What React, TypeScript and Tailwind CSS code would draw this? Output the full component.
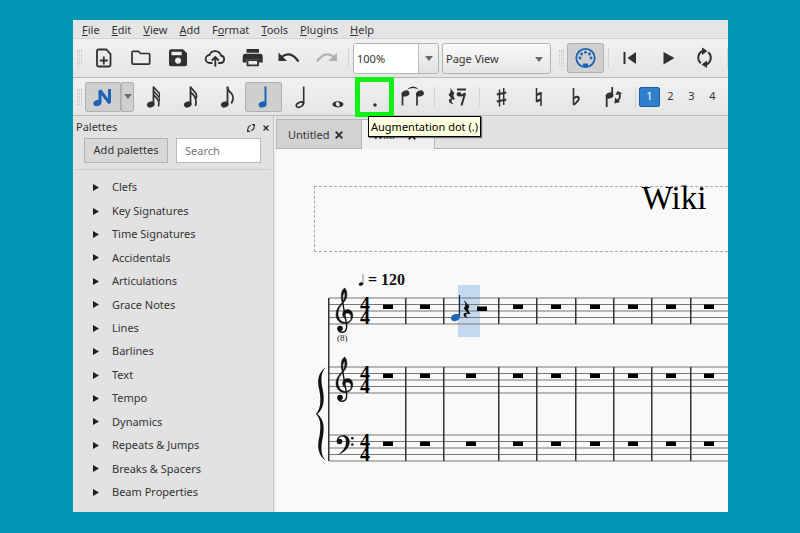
import { useState, type ReactNode } from "react";

const MENUS = [
  ["", "F", "ile"],
  ["", "E", "dit"],
  ["", "V", "iew"],
  ["", "A", "dd"],
  ["F", "o", "rmat"],
  ["", "T", "ools"],
  ["", "P", "lugins"],
  ["", "H", "elp"],
];

const PALETTES = [
  "Clefs",
  "Key Signatures",
  "Time Signatures",
  "Accidentals",
  "Articulations",
  "Grace Notes",
  "Lines",
  "Barlines",
  "Text",
  "Tempo",
  "Dynamics",
  "Repeats & Jumps",
  "Breaks & Spacers",
  "Beam Properties",
];

// x positions measured from the start of the system
const BARLINES = [77, 115, 170, 208, 247, 285, 323, 362];
const RESTS = [59, 96, 142, 189, 227, 266, 304, 342, 380];
const STAVES = [0, 69, 137];

function Tool({ label, active, children }: { label: string; active?: boolean; children: ReactNode }) {
  return (
    <button
      type="button"
      aria-label={label}
      className={`h-[30px] w-[37px] shrink-0 rounded-[3px] ${
        active ? "bg-[#cfcfcf] text-[#1c62b5] ring-1 ring-inset ring-[#b0b0b0]" : "text-[#2f3032]"
      }`}
    >
      <svg width="37" height="30" viewBox="0 0 37 30" fill="none" stroke="currentColor" strokeWidth="2">
        {children}
      </svg>
    </button>
  );
}

function Handle() {
  return (
    <div className="flex w-3 shrink-0 justify-center gap-px">
      <span className="h-4 border-l border-dotted border-[#c2c2c2]" />
      <span className="h-4 border-l border-dotted border-[#c2c2c2]" />
      <span className="h-4 border-l border-dotted border-[#c2c2c2]" />
    </div>
  );
}

function Separator() {
  return (
    <div className="flex w-2 shrink-0 justify-center">
      <span className="h-5 w-px bg-[#d3d3d3]" />
    </div>
  );
}

function Caret() {
  return (
    <svg width="8" height="5" viewBox="0 0 8 5" fill="#6a6a6a">
      <path d="M0 0h8L4 5z" />
    </svg>
  );
}

function FileToolbar() {
  const [zoom, setZoom] = useState("100%");

  return (
    <div className="flex h-[39px] items-center border-b border-[#b9b9b9] bg-linear-to-b from-[#f1f1f1] to-[#e5e5e5]">
      <Handle />
      <Tool label="New">
        <path d="M13.5 6.5h7.8l4.2 4.6v10.9a1.5 1.5 0 0 1-1.5 1.5H13.5A1.5 1.5 0 0 1 12 22V8a1.5 1.5 0 0 1 1.5-1.5z" strokeWidth="1.8" />
        <path d="M18.8 13.5v8M14.8 17.5h8" strokeWidth="1.8" />
      </Tool>
      <Tool label="Open">
        <path d="M10 20V9.5q0-1.2 1.2-1.2h5.3l2 2.2h8q1.2 0 1.2 1.2V20q0 1.2-1.2 1.2H11.2Q10 21.2 10 20z" strokeWidth="1.7" />
      </Tool>
      <Tool label="Save">
        <path
          d="M12 6.3h12l4 4v11.2q0 1.8-1.8 1.8H12q-2 0-2-1.8V8.2q0-1.9 2-1.9zM12.5 8.8v3.4h10.2V8.8zM19 14.5a3.1 3.1 0 1 0 .1 0z"
          fill="currentColor"
          fillRule="evenodd"
          stroke="none"
        />
      </Tool>
      <Tool label="Save to cloud">
        <path d="M16.5 20h-2.7a4 4 0 0 1-.3-8 6 6 0 0 1 11.4.5 3.8 3.8 0 0 1 .1 7.5h-2.8" strokeWidth="1.8" />
        <path d="M19.3 23.5v-9M15.8 17.5l3.5-3.5 3.5 3.5" strokeWidth="1.9" />
      </Tool>
      <Tool label="Print">
        <path
          d="M13.5 6h12.5v3.7H13.5zM12.5 10.8h14.5q2.7 0 2.7 2.7v6h-3.7v-3.2H13.5v3.2H9.7v-6q0-2.7 2.8-2.7z"
          fill="currentColor"
          stroke="none"
        />
        <path d="M14.500 17.200h10.500v5.200H14.500z" strokeWidth="1.8" />
      </Tool>
      <Tool label="Undo">
        <path d="M11.500 14q9-7 17 4.500" strokeWidth="2.200" />
        <path d="M8.500 9.500v8.500h8.500z" fill="currentColor" stroke="none" />
      </Tool>
      <Tool label="Redo">
        <g className="text-[#b0b0b0]" stroke="currentColor">
          <path d="M27 14q-9-7-17 4.500" strokeWidth="2.200" />
          <path d="M30 9.500v8.500h-8.500z" fill="currentColor" stroke="none" />
        </g>
      </Tool>
      <Separator />
      <div className="ml-px flex h-[31px] w-[86px] shrink-0 rounded-[3px] border border-[#b4b4b4] bg-white">
        <input
          type="text"
          aria-label="Zoom"
          value={zoom}
          onChange={(e) => setZoom(e.target.value)}
          className="w-0 flex-1 rounded-l-[3px] bg-white px-[3px] pt-0.5 outline-none"
        />
        <button
          type="button"
          aria-label="Zoom presets"
          className="flex w-5 items-center justify-center rounded-r-[3px] border-l border-[#bdbdbd] bg-linear-to-b from-[#f5f5f5] to-[#e2e2e2]"
        >
          <Caret />
        </button>
      </div>
      <div className="relative ml-[3px] shrink-0">
        <select
          aria-label="View mode"
          className="h-[31px] w-[109px] appearance-none rounded-[3px] border border-[#b4b4b4] bg-linear-to-b from-[#fafafa] to-[#e6e6e6] px-[3px] pt-0.5 outline-none"
        >
          <option>Page View</option>
          <option>Continuous View</option>
          <option>Single Page</option>
        </select>
        <span className="pointer-events-none absolute right-2 top-3.5">
          <Caret />
        </span>
      </div>
      <div className="w-1 shrink-0" />
      <Handle />
      <Tool label="MIDI input" active>
        <circle cx="18.500" cy="15" r="9.200" strokeWidth="1.800" />
        <g fill="currentColor" stroke="none">
          <circle cx="13" cy="15" r="1.400" />
          <circle cx="14.600" cy="11" r="1.400" />
          <circle cx="18.500" cy="9.300" r="1.400" />
          <circle cx="22.400" cy="11" r="1.400" />
          <circle cx="24" cy="15" r="1.400" />
          <path d="M16 24v-3.500h5V24z" />
        </g>
      </Tool>
      <Separator />
      <Tool label="Rewind">
        <path d="M12.500 9v12" strokeWidth="2" />
        <path d="M24 9v12l-8.500-6z" fill="currentColor" stroke="none" />
      </Tool>
      <Tool label="Play">
        <path d="M14.500 9v12.500L25.500 15z" fill="currentColor" stroke="none" />
      </Tool>
      <Tool label="Loop playback">
        <path d="M14.800 20.200a7.200 7.200 0 0 1 2-12.200M22.200 9.300a7.200 7.200 0 0 1-2 12.200" />
        <path d="M16 4.500l5.500 3.500-5.500 4zM21 17.500l-5.500 4 5.500 3.500z" fill="currentColor" stroke="none" />
      </Tool>
      <Separator />
    </div>
  );
}

function NoteToolbar() {
  const [voice, setVoice] = useState(1);

  return (
    <div className="flex h-[38px] items-center border-b border-[#b9b9b9] bg-linear-to-b from-[#f1f1f1] to-[#e5e5e5]">
      <Handle />
      <button type="button" aria-label="Note input" className="h-[30px] w-9 shrink-0 rounded-[3px] bg-[#cfcfcf] text-[#1c62b5] ring-1 ring-inset ring-[#b0b0b0]">
        <svg width="36" height="30" viewBox="0 0 36 30" fill="none" stroke="currentColor" strokeWidth="3">
          <path d="M15 21V8.500L24.500 21V7" strokeLinejoin="bevel" />
          <ellipse cx="12.300" cy="21" rx="4" ry="3" fill="currentColor" stroke="none" transform="rotate(-20 12.300 21)" />
        </svg>
      </button>
      <button
        type="button"
        aria-label="Note input modes"
        className="flex h-[30px] w-[13px] shrink-0 items-center justify-center rounded-r-[3px] bg-[#cfcfcf] ring-1 ring-inset ring-[#b0b0b0]"
      >
        <Caret />
      </button>
      <Tool label="32nd note">
        <NoteHead />
        <path d="M19.500 5l6 6.500M19.500 9l6 6.500M19.500 13q7 5 5 11.500" strokeWidth="1.600" />
        <path d="M25 11q1 2 .3 4M25 15.500q1 2 .3 4" strokeWidth="1.200" />
      </Tool>
      <Tool label="16th note">
        <NoteHead />
        <path d="M19.500 5l5.500 6.500q1.200 2.500.2 5M19.500 10q7.500 6 5 14" strokeWidth="1.700" />
      </Tool>
      <Tool label="Eighth note">
        <NoteHead />
        <path d="M19.500 5q.5 4 4 6.500 3.300 4-.2 10" strokeWidth="1.700" />
      </Tool>
      <Tool label="Quarter note" active>
        <path d="M20.500 4.500v18" strokeWidth="2" />
        <ellipse cx="17.500" cy="22.500" rx="4" ry="3" fill="currentColor" stroke="none" transform="rotate(-20 17.500 22.500)" />
      </Tool>
      <Tool label="Half note">
        <path d="M21.700 4.500v17.500" strokeWidth="1.600" />
        <ellipse cx="17.800" cy="22.700" rx="3.800" ry="2.200" strokeWidth="1.600" transform="rotate(-28 17.800 22.700)" />
      </Tool>
      <Tool label="Whole note">
        <path
          d="M18.900 19.200c3.300 0 5.500 1.300 5.500 3.100s-2.200 3.100-5.500 3.100-5.500-1.300-5.500-3.100 2.200-3.100 5.500-3.100zm-.6.900c-1.800.3-1.900 2-.9 3.300s2.800 1.400 3.200.1-.7-3.600-2.300-3.400z"
          fill="currentColor"
          fillRule="evenodd"
          stroke="none"
        />
      </Tool>
      <div className="relative shrink-0">
        <div className="outline-[5px] -outline-offset-4 outline-[#10ef18]">
          <div className="flex h-[38px] items-center">
            <Tool label="Augmentation dot">
              <circle cx="19" cy="23" r="1.800" fill="currentColor" stroke="none" />
            </Tool>
          </div>
        </div>
        <div
          role="tooltip"
          className="absolute left-3 top-[38px] z-10 whitespace-nowrap border border-black bg-[#ffffe1] px-0.5 py-px leading-[17px] text-black shadow-[1px_1px_1px_rgba(0,0,0,0.5)]"
        >
          Augmentation dot (.)
        </div>
      </div>
      <Tool label="Tie">
        <path d="M9.500 11.500v12M24 11.500v12" strokeWidth="1.700" />
        <g fill="currentColor" stroke="none">
          <ellipse cx="12.500" cy="11.500" rx="4" ry="2.900" transform="rotate(-20 12.500 11.500)" />
          <ellipse cx="27" cy="11.500" rx="4" ry="2.900" transform="rotate(-20 27 11.500)" />
          <path d="M14 7.500q6-6 12 0-6-3-12 0z" />
        </g>
      </Tool>
      <Separator />
      <Tool label="Rest">
        <path
          d="M12 6l4.300 5q-2 2.800.7 6l-1 .8q-2.500-.9-2.500 1t2 3.500q-5.500-1.200-4.500-4.500.7-1.400 2.500-1l-3-4q3.200-2.800 1.500-6.800z"
          fill="currentColor"
          stroke="none"
        />
        <path d="M19 7.500h9M20.500 12.500q4 2.200 6.500-1.300L23.500 23.500" strokeWidth="2" />
        <circle cx="21" cy="12.200" r="2.300" fill="currentColor" stroke="none" />
      </Tool>
      <Separator />
      <Tool label="Sharp">
        <path d="M16.500 7.500v17M20.700 6v17" strokeWidth="1.500" />
        <path d="M13.800 12.500l9.500-2M13.800 19.500l9.500-2" strokeWidth="2.200" />
      </Tool>
      <Tool label="Natural">
        <path d="M16.500 6v14M21 10v14" strokeWidth="1.500" />
        <path d="M16.500 12.800l4.500-1.600M16.500 19.300l4.500-1.600" strokeWidth="2.300" />
      </Tool>
      <Tool label="Flat">
        <path d="M16.500 6v17" strokeWidth="1.600" />
        <path d="M16.500 16.500q4-3 5.200-.8 1 2.800-5.200 7.300" strokeWidth="2" />
      </Tool>
      <Tool label="Flip direction">
        <path d="M12.700 13v12M18.200 5v8" strokeWidth="1.800" />
        <path d="M25.500 11.500q1.500 5-2.500 7.500" strokeWidth="1.800" />
        <g fill="currentColor" stroke="none">
          <ellipse cx="15.600" cy="13.500" rx="3.900" ry="2.900" transform="rotate(-20 15.600 13.500)" />
          <path d="M21.500 13l2-4 5 2.500zM21 15.500l5 4.500-5.500 1.500z" />
        </g>
      </Tool>
      <Separator />
      {[1, 2, 3, 4].map((n) => (
        <button
          key={n}
          type="button"
          aria-pressed={voice === n}
          onClick={() => setVoice(n)}
          className={`h-5 w-[21px] shrink-0 rounded-[3px] text-[#333] ${
            voice === n ? "bg-[#2f80cc] text-white ring-1 ring-inset ring-[#1d5da0]" : ""
          }`}
        >
          {n}
        </button>
      ))}
    </div>
  );
}

function NoteHead() {
  return (
    <>
      <path d="M19.500 4.500v18" strokeWidth="1.800" />
      <ellipse cx="16.700" cy="22.500" rx="3.900" ry="2.900" fill="currentColor" stroke="none" transform="rotate(-20 16.700 22.500)" />
    </>
  );
}

function PalettePanel() {
  return (
    <aside className="flex w-[201px] shrink-0 flex-col border-r border-[#c6c6c6] bg-[#e2e2e2]">
      <div className="flex h-[22px] items-center gap-2 pl-[3px] pr-1 pt-px">
        <h2 className="flex-1">Palettes</h2>
        <button type="button" aria-label="Undock">
          <svg width="8" height="8" viewBox="0 0 8 8" fill="none" stroke="#333" strokeWidth="1.200">
            <path d="M1.200 5Q.8 1.800 4 1.500M6.800 3Q7.200 6.200 4 6.500" />
            <path d="M4.500 0H8v3.500zM0 4.500V8h3.500z" fill="#333" stroke="none" />
          </svg>
        </button>
        <button type="button" aria-label="Close palettes">
          <Cross size={6} />
        </button>
      </div>
      <div className="mx-0.5 flex gap-2 border-b border-[#cfcfcf] pb-1.5 pl-[9px] pr-2.5">
        <button type="button" className="h-[25px] flex-1 whitespace-nowrap border border-[#b3b3b3] bg-[#d8d8d8]">
          Add palettes
        </button>
        <input
          type="search"
          aria-label="Search palettes"
          placeholder="Search"
          className="h-[25px] w-[85px] border border-[#b9b9b9] bg-white px-2 outline-none placeholder:text-[#777]"
        />
      </div>
      <ul className="flex flex-1 flex-col pb-2 pt-1.5">
        {PALETTES.map((name) => (
          <li key={name} className="flex flex-1">
            <button type="button" className="flex flex-1 items-center pl-5 text-left">
              <svg className="mr-[13px]" width="6" height="7" viewBox="0 0 6 7" fill="#1e1e1e">
                <path d="M0 0l6 3.500L0 7z" />
              </svg>
              {name}
            </button>
          </li>
        ))}
      </ul>
    </aside>
  );
}

function Cross({ size }: { size: number }) {
  return (
    <svg width={size} height={size} viewBox="0 0 8 8" stroke="#2b2b2b" strokeWidth="1.800">
      <path d="M.7.7l6.600 6.600M7.300.7L.7 7.300" />
    </svg>
  );
}

function TrebleClef() {
  return (
    <g fill="none" stroke="#111">
      <path d="M6.300 12L10.600 37q.6 6.500-4 7.300-3.600.2-4.600-3" strokeWidth="1.400" />
      <circle cx="4" cy="40.500" r="2.800" fill="#111" stroke="none" />
      <path
        d="M6 13.500C4.300 6 6 1.500 8.800 0c2.800 3.500 2.900 9.500-.5 13.500C4.500 18 2 20.500 2 26c0 5 3.500 8.700 8 8.400 3-.2 5.200-2.200 5.200-5 0-2.600-1.700-4.400-4-4.400-2.800 0-4 3.800-1 6-4.300-1-5.300-8.300.8-9.400 3.700-.2 6 2.800 5.700 6.400-.3 4.500-3.400 7.500-7.500 7.600C4 35.600.1 32 .1 26.500c0-6 3.700-9 6.900-13C9 11 9.300 7 8.700 4.500 7 5 6.400 9 7.200 12.500z"
        fill="#111"
        strokeWidth=".6"
      />
    </g>
  );
}

function Score() {
  return (
    <svg className="block h-[210px] w-full" role="img" aria-label="Score">
      <g transform="translate(82 10)">
        <path d="M5 0v10" stroke="#888" strokeWidth="1" />
        <ellipse cx="3" cy="10" rx="2.300" ry="1.700" fill="#111" transform="rotate(-20 3 10)" />
        <text x="10" y="11" fontSize="16" fontWeight="bold" fontFamily="Liberation Serif, serif" fill="#111">
          = 120
        </text>
      </g>
      <g transform="translate(53 34)">
        <rect x="129" y="-13" width="22" height="52" fill="#c4d9ef" />
        {STAVES.map((top, staff) => (
          <g key={top}>
            {[0, 6.5, 13, 19.5, 26].map((y) => (
              <rect key={y} x="0" y={top + y - 0.5} width="100%" height="1" fill="#777" />
            ))}
            {RESTS.map((x, i) =>
              staff === 0 && i === 2 ? null : <rect key={x} x={x - 5} y={top + 6.5} width="10" height="4.500" fill="#000" />
            )}
            {[13, 26].map((y) => (
              <text key={y} x="31" y={top + y} fontSize="20" fontWeight="bold" fontFamily="Liberation Serif, serif" fill="#000">
                4
              </text>
            ))}
          </g>
        ))}

        <g fill="#333">
          <rect x="-1" y="0" width="1.500" height="163" />
          {BARLINES.map((x) => (
            <g key={x}>
              <rect x={x - 1} y="0" width="1.500" height="26" />
              <rect x={x - 1} y="69" width="1.500" height="94" />
            </g>
          ))}
        </g>

        <g transform="translate(7 -10)">
          <TrebleClef />
        </g>
        <g transform="translate(7 59)">
          <TrebleClef />
        </g>
        <text x="8" y="43" fontSize="9" fontFamily="Liberation Serif, serif" fill="#222">
          (8)
        </text>

        {/* bass clef */}
        <g transform="translate(7 137)" fill="#111">
          <circle cx="3.500" cy="6.500" r="2.800" />
          <path d="M.8 6.500C.8 2.500 3.500.3 7 .3c4.300 0 6.700 2.700 6.700 6.700 0 6-5.500 10.500-13 13.500C6 17 10 13 10 7c0-3.500-1.200-5.600-3.500-5.600-2.500 0-4.500 1.700-4.700 5z" />
          <circle cx="16.300" cy="3.300" r="1.300" />
          <circle cx="16.300" cy="9.500" r="1.300" />
        </g>

        {/* entered quarter note followed by its rests */}
        <path d="M130.500-3v22" stroke="#223" strokeWidth="1.200" />
        <ellipse cx="126.500" cy="19.500" rx="4.700" ry="3.500" fill="#1c68b8" transform="rotate(-18 126.500 19.500)" />
        <path
          d="M135.500 2.500l5 6q-2.800 3 .8 7l-.8.6q-3.400-1.200-3.400 1t1.900 3q-4.800-.9-4.500-3.900.5-2 3.700-1.400l-3.500-4.500q3.400-3.300.4-7.300z"
          fill="#111"
        />
        <rect x="148" y="8.500" width="10" height="4.500" fill="#000" />

        {/* brace joining the two lower staves */}
        <path
          d="M-3 69c-6 6-5 14-3 24 1.500 9 1 17-5.500 23 6.500 6 7 13 5.500 22-2 10-3 19 3 25-8.500-6-9-15-6.500-25 1.500-9 1.500-17-3.500-22 5-6 5-14 3.500-23-2.500-10-2-18 6.500-24z"
          fill="#111"
        />
      </g>
    </svg>
  );
}

function Document() {
  return (
    <main className="flex min-w-0 flex-1 flex-col bg-[#e2e2e2]">
      <div className="flex h-[33px] items-end pt-[3px]">
        <div className="flex h-full w-[86px] items-center justify-between border border-[#b5b5b5] bg-[#d2d2d2] pl-[11px] pr-[18px] pt-0.5">
          <button type="button">Untitled</button>
          <button type="button" aria-label="Close Untitled">
            <Cross size={8} />
          </button>
        </div>
        <div className="flex h-full w-[73px] items-center justify-between border-r border-t border-[#b5b5b5] bg-[#f0f0f0] pl-[11px] pr-[18px] pt-0.5">
          <button type="button">Wiki</button>
          <button type="button" aria-label="Close Wiki">
            <Cross size={8} />
          </button>
        </div>
        <div className="h-full flex-1 border-b border-[#b5b5b5]" />
      </div>
      <div className="flex-1 overflow-hidden bg-[#f9f9f9]">
        <div className="ml-[38px] mt-[37px] h-[66px] w-[720px] border border-dashed border-[#a8a8a8] text-center">
          <h1 className="font-['Liberation_Serif',serif] text-[33px] leading-[22px] text-black">Wiki</h1>
        </div>
        <div className="mt-3">
          <Score />
        </div>
      </div>
    </main>
  );
}

export default function App() {
  return (
    <div className="flex min-h-screen flex-col bg-[#0097b4] pb-[21px] pl-[73px] pr-[72px] pt-5 font-['Noto_Sans',sans-serif] text-[11px] text-[#333]">
      <div className="flex flex-1 flex-col overflow-hidden bg-[#e2e2e2]">
        <nav className="flex h-[19px] items-center gap-3 border-b border-[#d2d2d2] bg-[#e5e5e5] pl-[9px] pt-0.5">
          {MENUS.map(([before, key, after]) => (
            <button key={before + key + after} type="button">
              {before}
              <span className="underline">{key}</span>
              {after}
            </button>
          ))}
        </nav>
        <FileToolbar />
        <NoteToolbar />
        <div className="flex flex-1">
          <PalettePanel />
          <div className="w-0.5 shrink-0 bg-[#ececec]" />
          <Document />
        </div>
      </div>
    </div>
  );
}
